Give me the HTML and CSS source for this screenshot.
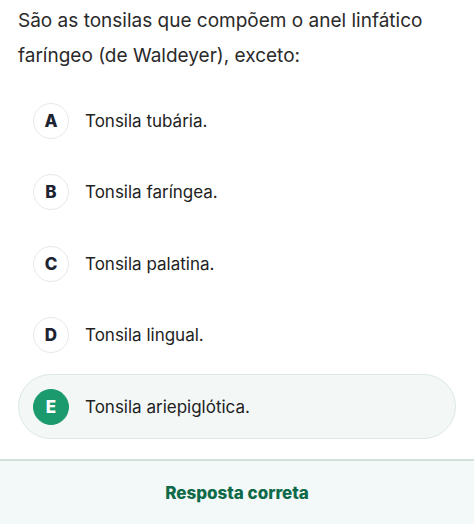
FILE: index.html
```html
<!DOCTYPE html>
<html lang="pt-BR">
<head>
  <meta charset="UTF-8">
  <meta name="viewport" content="width=device-width, initial-scale=1.0">
  <title>Questão</title>
  <link rel="stylesheet" href="styles.css">
</head>
<body>

<p class="enunciado">São as tonsilas que compõem o anel linfático faríngeo (de Waldeyer), exceto:</p>

<ul class="alternativas">
  <li class="alternativa"><span class="letra">A</span>Tonsila tubária.</li>
  <li class="alternativa"><span class="letra">B</span>Tonsila faríngea.</li>
  <li class="alternativa"><span class="letra">C</span>Tonsila palatina.</li>
  <li class="alternativa"><span class="letra">D</span>Tonsila lingual.</li>
  <li class="alternativa correta"><span class="letra">E</span>Tonsila ariepiglótica.</li>
</ul>

<div class="resultado">Resposta correta</div>

</body>
</html>
```

FILE: styles.css
```css
body {
  margin: 0;
  font-family: Inter, "Noto Sans", sans-serif;
  background-color: #fff;
  color: #2a2a2a;
}
.enunciado {
  margin: 0;
  padding: 3px 18px 0;
  font-size: 19px;
  line-height: 35px;
}
.alternativas {
  list-style: none;
  margin: 15px 0 0;
  padding: 0 18px;
  display: flex;
  flex-direction: column;
  gap: 6.6px;
}
.alternativa {
  height: 65px;
  box-sizing: border-box;
  display: flex;
  align-items: center;
  gap: 16px;
  padding-left: 15px;
  border: 1px solid transparent;
  border-radius: 33px;
  font-size: 17px;
  color: #222;
}
.letra {
  width: 36px;
  height: 36px;
  box-sizing: border-box;
  border: 1px solid #e8e8e8;
  border-radius: 50%;
  display: flex;
  align-items: center;
  justify-content: center;
  font-size: 17px;
  font-weight: 800;
  color: #1d2331;
  margin-left: -1px;
}
.correta {
  background-color: #f3f8f7;
  border-color: #dbe8e4;
}
.correta .letra {
  background-color: #1b9a6e;
  border-color: #1b9a6e;
  color: #fff;
}
.resultado {
  margin-top: 20px;
  height: 63px;
  display: flex;
  align-items: center;
  justify-content: center;
  background-color: #f3f9f8;
  border-top: 2px solid #d3e0dc;
  font-size: 17px;
  font-weight: 800;
  color: #0e6a48;
}
```
